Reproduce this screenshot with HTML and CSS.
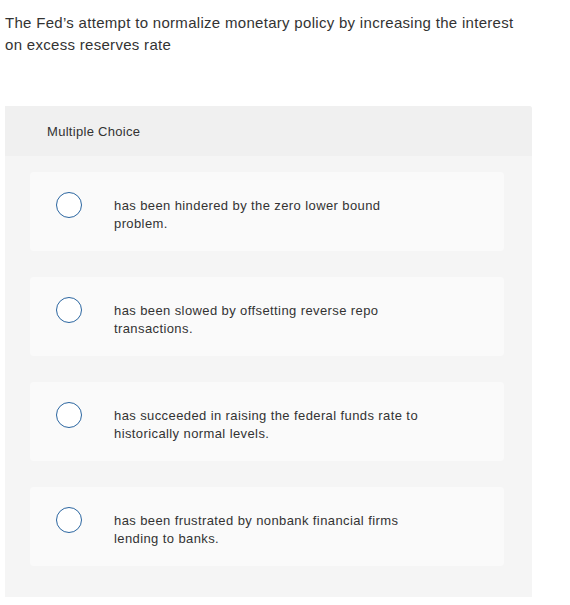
FILE: index.html
```html
<!DOCTYPE html>
<html>
<head>
<meta charset="utf-8">
<link rel="stylesheet" href="styles.css">
</head>
<body>
<div class="page">
  <p class="question">The Fed’s attempt to normalize monetary policy by increasing the interest on excess reserves rate</p>
  <div class="panel">
    <div class="panel-head">Multiple Choice</div>
    <div class="options">
      <div class="option"><span class="radio"></span><span class="label">has been hindered by the zero lower bound problem.</span></div>
      <div class="option"><span class="radio"></span><span class="label">has been slowed by offsetting reverse repo transactions.</span></div>
      <div class="option"><span class="radio"></span><span class="label">has succeeded in raising the federal funds rate to historically normal levels.</span></div>
      <div class="option"><span class="radio"></span><span class="label">has been frustrated by nonbank financial firms lending to banks.</span></div>
    </div>
  </div>
</div>
</body>
</html>
```
FILE: styles.css
```css
html, body { margin: 0; padding: 0; background: #fff; }
body { font-family: "Liberation Sans", Arial, sans-serif; color: #333; }
.page { padding: 12px 0 0 5px; width: 527px; }
.question { margin: 0; font-size: 15px; line-height: 22px; letter-spacing: 0.3px; width: 530px; }
.panel { margin-top: 50px; background: #f5f5f5; border-radius: 0 3px 0 0; padding-bottom: 31px; }
.panel-head { height: 50px; background: #f0f0f0; border-radius: 0 3px 0 0; padding-left: 42px; font-size: 13px; letter-spacing: 0.3px; line-height: 51px; }
.options { display: flex; flex-direction: column; gap: 26px; padding: 16px 28px 0 25px; }
.option { display: flex; align-items: flex-start; background: #fafafa; border-radius: 4px; height: 79px; box-sizing: border-box; padding: 25px 0 0 26px; }
.radio { width: 24px; height: 24px; border: 1.5px solid #2a65a0; border-radius: 50%; margin-top: -5px; background: #fff; flex: none; }
.label { margin-left: 32px; width: 312px; font-size: 13px; line-height: 18px; letter-spacing: 0.4px; }
```
